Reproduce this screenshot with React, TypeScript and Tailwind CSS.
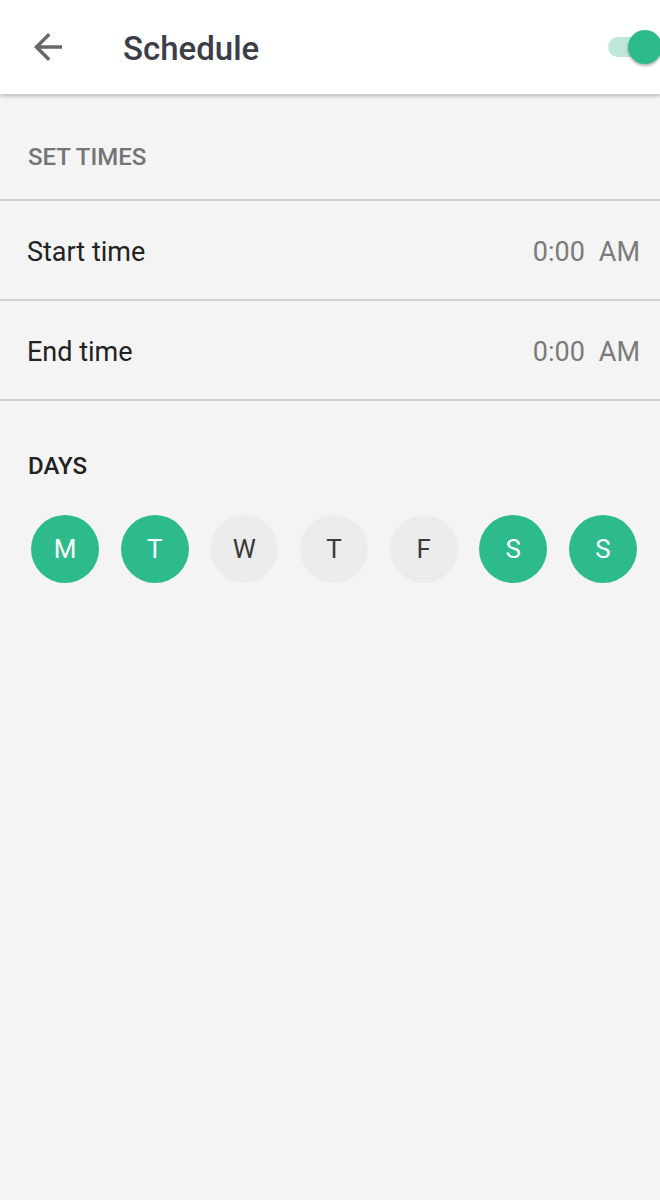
const days = [
  { label: "M", on: true },
  { label: "T", on: true },
  { label: "W", on: false },
  { label: "T", on: false },
  { label: "F", on: false },
  { label: "S", on: true },
  { label: "S", on: true },
];

const times = [
  { label: "Start time", value: "0:00" },
  { label: "End time", value: "0:00" },
];

function BackArrow() {
  return (
    <svg viewBox="0 0 24 24" className="h-[42px] w-[42px] fill-[#686868]">
      <path d="M20 11H7.83l5.59-5.59L12 4l-8 8 8 8 1.41-1.41L7.83 13H20v-2z" />
    </svg>
  );
}

export default function App() {
  return (
    <div className="min-h-[1200px] w-[660px] overflow-hidden bg-[#f4f4f4] font-['Roboto',sans-serif]">
      <header className="relative z-10 flex h-[94px] items-center bg-white shadow-[0_2px_4px_rgba(0,0,0,0.25)]">
        <div className="flex w-[123px] items-center pl-[27px]">
          <BackArrow />
        </div>
        <h1 className="flex-1 pt-[3px] text-[33px] font-medium text-[#3b3e46]">Schedule</h1>
        <div className="relative mr-[-2px] h-[34px] w-[54px]">
          <div className="absolute right-0 top-[7px] h-[20px] w-[54px] rounded-full bg-[#bfe7d9]" />
          <div className="absolute right-0 top-0 h-[34px] w-[34px] rounded-full bg-[#2dba8c] shadow-[0_2px_3px_rgba(0,0,0,0.3)]" />
        </div>
      </header>

      <div className="h-[107px] border-b-2 border-[#d0d0d0] pl-[28px] pt-[49px]">
        <div className="text-[24px] font-medium leading-[28px] text-[#757575]">SET TIMES</div>
      </div>

      {times.map((t) => (
        <div
          key={t.label}
          className="flex h-[100px] items-center justify-between border-b-2 border-[#d0d0d0] pl-[27px] pr-[20px] pt-[4px]"
        >
          <span className="text-[27px] text-[#222222]">{t.label}</span>
          <span className="text-[27px] text-[#7b7b7b]">
            {t.value}
            <span className="ml-[14px]">AM</span>
          </span>
        </div>
      ))}

      <div className="pl-[28px] pt-[51px]">
        <div className="text-[24px] font-medium leading-[28px] text-[#222222]">DAYS</div>
      </div>

      <div className="mt-[35px] flex justify-between pl-[31px] pr-[23px]">
        {days.map((d, i) => (
          <div
            key={i}
            className={
              d.on
                ? "flex h-[68px] w-[68px] items-center justify-center rounded-full bg-[#2dba8c] text-[26px] text-white"
                : "flex h-[68px] w-[68px] items-center justify-center rounded-full bg-[#ececec] text-[26px] text-[#3a3a3a]"
            }
          >
            {d.label}
          </div>
        ))}
      </div>
    </div>
  );
}
